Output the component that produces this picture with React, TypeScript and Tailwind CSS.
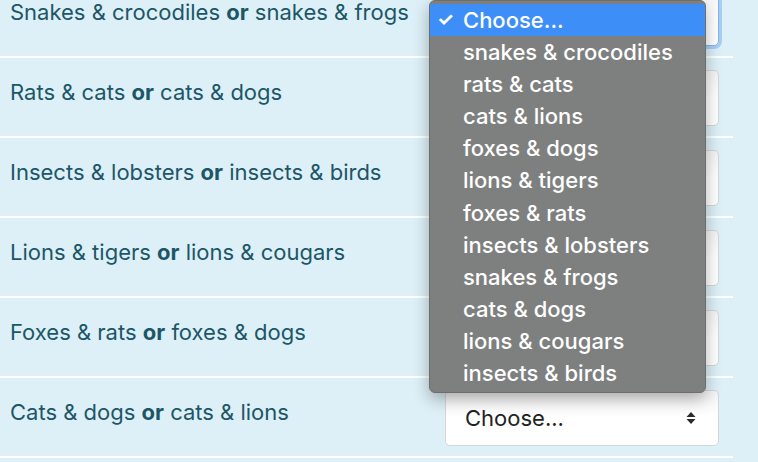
import React from "react";

const rows = [
  ["Snakes & crocodiles", "snakes & frogs"],
  ["Rats & cats", "cats & dogs"],
  ["Insects & lobsters", "insects & birds"],
  ["Lions & tigers", "lions & cougars"],
  ["Foxes & rats", "foxes & dogs"],
  ["Cats & dogs", "cats & lions"],
];

const options = [
  "snakes & crocodiles",
  "rats & cats",
  "cats & lions",
  "foxes & dogs",
  "lions & tigers",
  "foxes & rats",
  "insects & lobsters",
  "snakes & frogs",
  "cats & dogs",
  "lions & cougars",
  "insects & birds",
];

function Arrows() {
  return (
    <svg width="10" height="14" viewBox="0 0 10 14" className="text-[#2b2b2b]">
      <path d="M5 1 L9.5 6 L0.5 6 Z" fill="currentColor" />
      <path d="M5 13 L9.5 8 L0.5 8 Z" fill="currentColor" />
    </svg>
  );
}

function FakeSelect({ focused }: { focused?: boolean }) {
  return (
    <div
      className={
        "flex h-[56px] w-[274px] items-center justify-between rounded-[5px] border bg-gradient-to-b from-[#f4f4f4] via-white to-white pl-[19px] pr-[22px] text-[22px] text-[#222] " +
        (focused
          ? "border-[#80b5f0] shadow-[0_0_0_3px_#a9cdf5]"
          : "border-[#d6d6d6]")
      }
    >
      <span>Choose...</span>
      <Arrows />
    </div>
  );
}

export default function App() {
  return (
    <div
      className="relative h-[462px] w-[758px] overflow-hidden bg-[#ddf0f7] text-[#1c5667]"
      style={{ fontFamily: 'Inter, "Liberation Sans", Arial, sans-serif' }}
    >
      <div className="-mt-[22px] w-[733px]">
        {rows.map(([a, b], i) => (
          <div
            key={i}
            className="flex h-[80px] items-start justify-between border-b-2 border-white pr-[14px]"
          >
            <div className="pl-[10px] pt-[21px] text-[22px] leading-[26px]">
              {a} <b className="font-bold">or</b> {b}
            </div>
            <div className="pt-[12px]">
              <FakeSelect focused={i === 0} />
            </div>
          </div>
        ))}
      </div>

      <div className="absolute left-[429px] top-0 w-[277px] rounded-[6px] border border-[#6d6f6f] bg-[#7e8080] py-[3px] text-[22px] font-medium leading-[32.1px] text-white shadow-[0_6px_16px_rgba(0,0,0,0.3)]">
        <div className="flex items-center bg-[#3d8ef7] pl-[7px]">
          <span className="w-[26px] text-[19px] font-bold">✓</span>
          <span>Choose...</span>
        </div>
        {options.map((o) => (
          <div key={o} className="pl-[33px]">
            {o}
          </div>
        ))}
      </div>
    </div>
  );
}
